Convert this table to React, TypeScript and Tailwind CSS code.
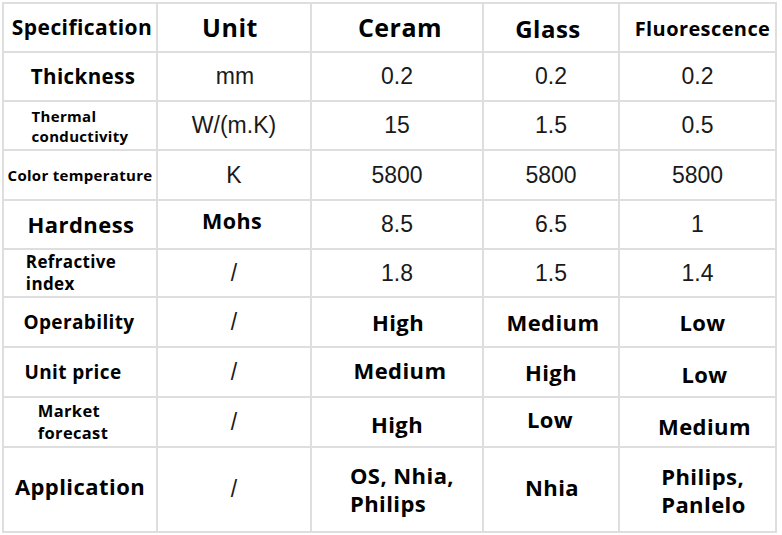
import React from 'react';

type Cell = {
  text: React.ReactNode;
  className: string;
};

const head = "font-['Open_Sans',sans-serif] font-bold tracking-[0.02em] text-black";
const num = "font-['Liberation_Sans',Arial,sans-serif] text-[23px] text-[#1a1a1a]";
const word = "font-['Open_Sans',sans-serif] font-bold tracking-[0.02em] text-[22px] text-black";

const rows: Cell[][] = [
  [
    { text: 'Specification', className: `${head} text-[21px] translate-x-[2px]` },
    { text: 'Unit', className: `${head} text-[25px] -translate-x-[4px]` },
    { text: 'Ceram', className: `${head} text-[25px] translate-x-[3px]` },
    { text: 'Glass', className: `${head} text-[24px] -translate-x-[3px] translate-y-[1px]` },
    { text: 'Fluorescence', className: `${head} text-[20px] translate-x-[5px] translate-y-[1px]` },
  ],
  [
    { text: 'Thickness', className: `${head} text-[20.5px] translate-x-[3px]` },
    { text: 'mm', className: `${num} translate-x-[1px]` },
    { text: '0.2', className: num },
    { text: '0.2', className: num },
    { text: '0.2', className: num },
  ],
  [
    {
      text: (
        <span className="block text-left leading-[20px]">
          Thermal
          <br />
          conductivity
        </span>
      ),
      className: `${head} text-[15px]`,
    },
    { text: 'W/(m.K)', className: num },
    { text: '15', className: num },
    { text: '1.5', className: num },
    { text: '0.5', className: num },
  ],
  [
    { text: 'Color temperature', className: `${head} text-[15px]` },
    { text: 'K', className: num },
    { text: '5800', className: num },
    { text: '5800', className: num },
    { text: '5800', className: num },
  ],
  [
    { text: 'Hardness', className: `${head} text-[22px] translate-x-[1px]` },
    { text: 'Mohs', className: `${head} text-[21.5px] -translate-x-[2px] -translate-y-[3px]` },
    { text: '8.5', className: num },
    { text: '6.5', className: num },
    { text: '1', className: num },
  ],
  [
    {
      text: (
        <span className="block text-left leading-[22px]">
          Refractive
          <br />
          index
        </span>
      ),
      className: `${head} text-[17px] -translate-x-[9px]`,
    },
    { text: '/', className: num },
    { text: '1.8', className: num },
    { text: '1.5', className: num },
    { text: '1.4', className: num },
  ],
  [
    { text: 'Operability', className: `${head} text-[19px] -translate-x-[1px]` },
    { text: '/', className: num },
    { text: 'High', className: `${word} translate-x-[1px]` },
    { text: 'Medium', className: `${word} translate-x-[2px]` },
    { text: 'Low', className: `${word} translate-x-[5px]` },
  ],
  [
    { text: 'Unit price', className: `${head} text-[19px] -translate-x-[7px]` },
    { text: '/', className: num },
    { text: 'Medium', className: `${word} translate-x-[3px] -translate-y-[2px]` },
    { text: 'High', className: word },
    { text: 'Low', className: `${word} translate-x-[7px] translate-y-[2px]` },
  ],
  [
    {
      text: (
        <span className="block text-left leading-[22px]">
          Market
          <br />
          forecast
        </span>
      ),
      className: `${head} text-[16.5px] -translate-x-[7px]`,
    },
    { text: '/', className: num },
    { text: 'High', className: `${word} translate-y-[2px]` },
    { text: 'Low', className: `${word} -translate-x-[1px] -translate-y-[3px]` },
    { text: 'Medium', className: `${word} translate-x-[7px] translate-y-[4px]` },
  ],
  [
    { text: 'Application', className: `${head} text-[22px] -translate-y-[3px]` },
    { text: '/', className: num },
    {
      text: (
        <span className="block text-left leading-[28px]">
          OS, Nhia,
          <br />
          Philips
        </span>
      ),
      className: `${word} translate-x-[5px] -translate-y-[1px]`,
    },
    { text: 'Nhia', className: `${word} translate-x-[1px] -translate-y-[2px]` },
    {
      text: (
        <span className="block text-left leading-[28px]">
          Philips,
          <br />
          Panlelo
        </span>
      ),
      className: `${word} translate-x-[6px]`,
    },
  ],
];

export default function App() {
  return (
    <div className="min-h-[535px] w-[782px] bg-white pl-[2px] pt-[2px]">
      <div className="grid w-fit grid-cols-[152px_152px_170px_134px_155px] grid-rows-[47px_47px_47px_48px_47px_46px_48px_48px_48px_83px] gap-[2px] bg-[#dedede] p-[2px]">
        {rows.map((row, r) =>
          row.map((cell, c) => (
            <div key={`${r}-${c}`} className="flex items-center justify-center bg-white">
              <div className={`whitespace-nowrap ${cell.className}`}>{cell.text}</div>
            </div>
          )),
        )}
      </div>
    </div>
  );
}
